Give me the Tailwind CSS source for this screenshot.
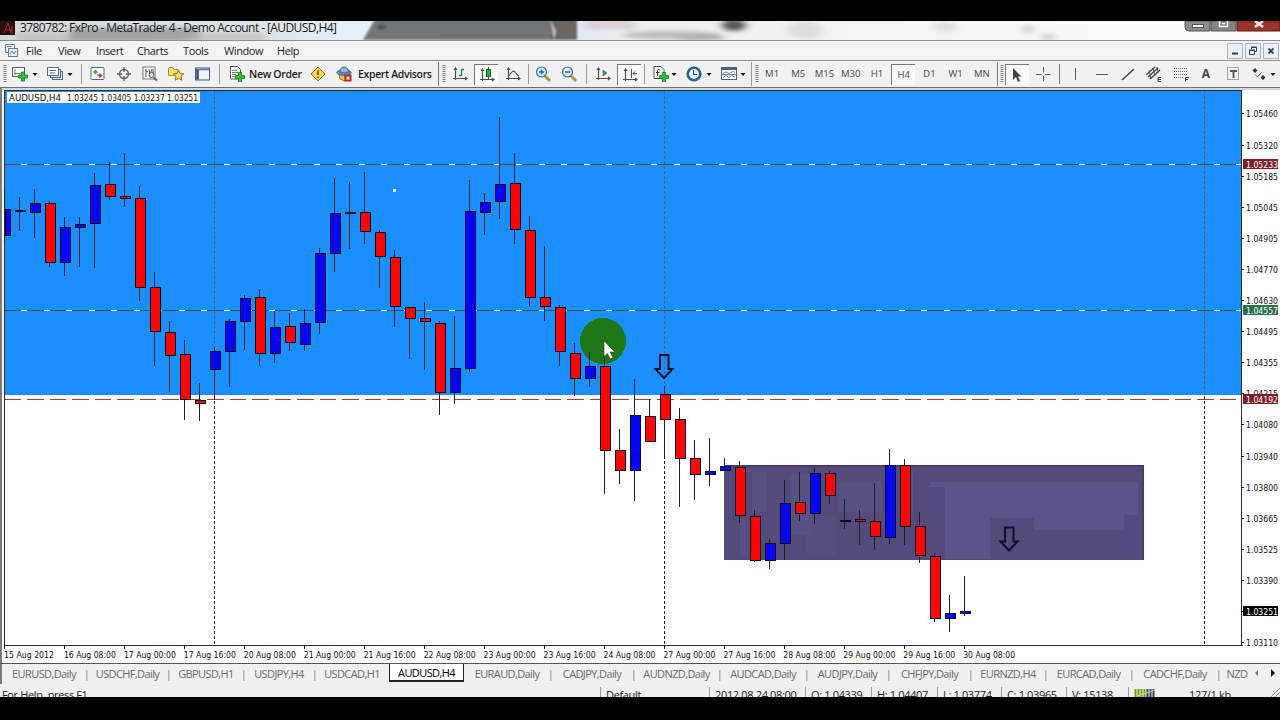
<!DOCTYPE html>
<html lang="en">
<head>
    <meta charset="UTF-8">
    <meta name="viewport" content="width=device-width, initial-scale=1.0">
    <title>MetaTrader 4</title>
    <script src="https://cdn.jsdelivr.net/npm/@tailwindcss/browser@4"></script>
</head>
<body class="bg-black overflow-hidden">
<div class="w-[1280px] h-[720px] pt-[21px] pb-[23px] bg-black flex flex-col overflow-hidden font-['Open_Sans',sans-serif] text-[#1a1a1a]">

    <!-- title bar -->
    <header class="relative h-5 shrink-0 bg-[#f4f4f6] overflow-hidden flex items-center">
        <svg class="absolute inset-0" width="1280" height="20" viewBox="0 0 1280 20">
            <defs>
                <linearGradient id="glass" x1="0" x2="1" y1="0" y2="0">
                    <stop offset="0" stop-color="#d5d9dc"/><stop offset=".2" stop-color="#dde3e7"/><stop offset=".28" stop-color="#e4f1f8"/><stop offset=".46" stop-color="#e1ebf3"/><stop offset=".5" stop-color="#eeeeee"/><stop offset=".7" stop-color="#f4f4f5"/><stop offset="1" stop-color="#fdfdfd"/>
                </linearGradient>
                <filter id="b3" x="-20%" y="-100%" width="140%" height="300%"><feGaussianBlur stdDeviation="4 2"/></filter>
                <filter id="b1"><feGaussianBlur stdDeviation=".8"/></filter>
            </defs>
            <rect width="1280" height="20" fill="url(#glass)"/>
            <g filter="url(#b3)">
                <rect x="16" y="12" width="60" height="8" fill="#aaa" opacity=".5"/>
                <rect x="70" y="7" width="130" height="13" fill="#8c8e90" opacity=".75"/>
                <rect x="185" y="12" width="80" height="8" fill="#aeb2b4" opacity=".6"/>
                <ellipse cx="672" cy="14" rx="50" ry="4" fill="#bbb"/>
                <ellipse cx="734" cy="4" rx="12" ry="6" fill="#555"/>
                <ellipse cx="700" cy="17" rx="26" ry="2.5" fill="#aaa"/>
                <ellipse cx="805" cy="9" rx="18" ry="9" fill="#dcdcdc"/>
                <ellipse cx="945" cy="6" rx="12" ry="5" fill="#ddd"/>
                <ellipse cx="1028" cy="8" rx="6" ry="4" fill="#ccc"/>
                <ellipse cx="1048" cy="16" rx="8" ry="3" fill="#ccc"/>
                <rect x="585" y="0" width="50" height="8" fill="#d8cfd0"/>
            </g>
            <g filter="url(#b1)">
                <path d="M375 -2 L363 19 H577 V-2Z" fill="#71767a"/>
                <rect x="550" y="-2" width="27" height="21" fill="#6d655f"/>
                <path d="M550 -2 L554 19 L556 10Z" fill="#c8bdb0"/>
                <ellipse cx="382" cy="6" rx="5" ry="3" fill="#54585b"/>
            </g>
            <rect y="19" width="1280" height="1" fill="#8d8f92"/>
        </svg>
        <svg class="relative shrink-0" width="15" height="20" viewBox="0 0 15 20"><rect width="15" height="14" fill="#2b0f10"/><path d="M4 12 L8 2 L11 12M6 9h7M12 5v8" stroke="#a3262b" fill="none"/></svg>
        <h1 class="relative ml-[5px] -mt-[6px] text-[12px] leading-[20px] whitespace-nowrap tracking-[-0.58px]">3780782: FxPro - MetaTrader 4 - Demo Account - [AUDUSD,H4]</h1>
        <svg class="absolute top-0 right-0" width="96" height="11" viewBox="0 0 96 11">
            <path d="M1 0H26V10H5Q1 10 1 6Z" fill="#8d8b8b" stroke="#555"/>
            <path d="M27 0H52V10H27Z" fill="#858383" stroke="#555"/>
            <path d="M53 0H96V10H53Z" fill="#9a342b" stroke="#541a16"/>
            <rect x="8.500" y="3.500" width="11" height="3" fill="#fff" stroke="#555"/>
            <path d="M35.500 0V5.500H43.500V0M38 2.500H41" fill="none" stroke="#fff" stroke-width="1.600"/>
            <path d="M71 0L79 6M79 0L71 6" stroke="#f5e9e8" stroke-width="2.500"/>
        </svg>
    </header>

    <!-- menu -->
    <nav class="h-5 shrink-0 bg-[#f3f3f3] border-b border-[#8f8f8f] flex items-center text-[11px] leading-none tracking-[-0.4px] whitespace-nowrap [&>*]:shrink-0">
        <svg class="ml-[5px] mr-2" width="13" height="13" viewBox="0 0 13 13" fill="none" stroke="#5d7f94"><path d="M.5 .5H9.500V4M.5 .5V8.500H3"/><rect x="3.500" y="4.500" width="9" height="8" fill="#e3edf3"/><path d="M5 10l2-3 2 3 2-3M2 2.500h5" /></svg>
        <a class="w-8">File</a><a class="w-[38px]">View</a><a class="w-[41px]">Insert</a><a class="w-[46px]">Charts</a><a class="w-[41px]">Tools</a><a class="w-[53px]">Window</a><a>Help</a>
        <div class="ml-auto mr-px flex gap-[2px]">
            <svg width="16" height="16" viewBox="0 0 16 16" fill="none" stroke="#39424a"><rect x=".5" y=".5" width="15" height="15" fill="#e9f0f7" stroke="#a6b6c6"/><path d="M5 10.500h6" stroke-width="2"/></svg>
            <svg width="16" height="16" viewBox="0 0 16 16" fill="none" stroke="#39424a"><rect x=".5" y=".5" width="15" height="15" fill="#e9f0f7" stroke="#a6b6c6"/><path d="M6.500 6V4.500h5v4H10M6 4h6"/><path d="M4.500 7.500h5v4h-5zM4 7h6"/></svg>
            <svg width="16" height="16" viewBox="0 0 16 16" fill="none" stroke="#39424a"><rect x=".5" y=".5" width="15" height="15" fill="#e9f0f7" stroke="#a6b6c6"/><path d="M5.500 5.500l5 5M10.500 5.500l-5 5" stroke-width="1.800"/></svg>
        </div>
    </nav>

    <!-- toolbar -->
    <div class="h-[26px] shrink-0 bg-[#f1f1f1] flex items-center text-[11px] leading-none whitespace-nowrap [&>*]:shrink-0">
        <svg width="0" height="0" class="absolute">
            <defs>
                <g id="plus"><path d="M3 0h3v3h3v3H6v3H3V6H0V3h3z" fill="#2fc03c" stroke="#137a1d" stroke-width=".8"/></g>
                <g id="axes" fill="none" stroke="#4f4f4f"><path d="M3.500 2v12M1 12.500h14M2 4l1.500-2L5 4M13 11l2 1.500L13 14" stroke-width="1.200"/></g>
                <g id="grip" fill="none" stroke="#7d7d7d"><path d="M2 0v18" stroke-width="3" stroke-dasharray="1 1"/></g>
                <path id="caret" d="M.5 0h5L3 3z" fill="#111"/>
            </defs>
        </svg>
        <svg class="ml-[3px]" width="4" height="18"><use href="#grip"/></svg>
        <svg class="ml-[5px]" width="16" height="16" viewBox="0 0 16 16"><rect x=".5" y="1.500" width="12" height="9" fill="#fff" stroke="#4b5f6b"/><path d="M3 3v6M2 7.500h8" stroke="#6d8291" fill="none"/><use href="#plus" x="6.500" y="6"/></svg>
        <svg class="ml-1" width="6" height="3"><use href="#caret"/></svg>
        <svg class="ml-[9px]" width="16" height="16" viewBox="0 0 16 16" stroke="#4b6b85"><rect x="5.500" y="5.500" width="10" height="8" fill="#dfe9f1"/><rect x="3.500" y="3.500" width="10" height="8" fill="#dfe9f1"/><rect x=".5" y="1.500" width="11" height="8" fill="#fff"/><path d="M2 4.500h7M3 7h5"/></svg>
        <svg class="ml-1" width="6" height="3"><use href="#caret"/></svg>
        <i class="ml-2 w-px h-5 bg-[#9a9a9a]"></i>
        <svg class="ml-2" width="16" height="16" viewBox="0 0 16 16"><rect x="1" y="1.500" width="13" height="12" rx="1" fill="#fff" stroke="#4c6c84"/><path d="M3.500 6L5.500 4l2 2-2 2z" fill="#2fae3c" stroke="#1c7a28" stroke-width=".6"/><path d="M8 9.500l2-2 2 2-2 2z" fill="#d83a28" stroke="#8f2217" stroke-width=".6"/><path d="M7 8l1.500 1.500" stroke="#777"/></svg>
        <svg class="ml-[10px]" width="16" height="16" viewBox="0 0 16 16" fill="none" stroke="#606060" stroke-width="1.400"><circle cx="8" cy="8" r="4.500"/><path d="M8 1v5M8 10v5M1 8h5M10 8h5"/></svg>
        <svg class="ml-[10px]" width="16" height="16" viewBox="0 0 16 16" fill="none" stroke="#555"><rect x="1" y="1" width="12" height="12" fill="#fff" stroke="#777"/><path d="M4 3v8M3 4l3 2M7 3l1 6 2-6M11 3v5"/><circle cx="9.500" cy="9" r="2.500" fill="#dfeaf0"/><path d="M11.500 11.500l3.500 3" stroke-width="2" stroke="#6b6b4a"/></svg>
        <svg class="ml-[10px]" width="16" height="16" viewBox="0 0 16 16"><path d="M.5 2.500V9.500H10V3.500H6L5 1.500H1z" fill="#f7e27a" stroke="#a58a2e"/><path d="M10.500 4l1.600 3.500 3.600.4-2.700 2.500.8 3.900-3.300-2-3.300 2 .8-3.900L5.300 7.900 9 7.500z" fill="#fbe25a" stroke="#8a6d1c"/></svg>
        <svg class="ml-[10px]" width="16" height="16" viewBox="0 0 16 16"><rect x="1.500" y="2" width="14" height="12" fill="#eef4f9" stroke="#3e5b78"/><path d="M2 3.500h13" stroke="#557a9d" stroke-width="1.500"/><path d="M3.500 4v9.500" stroke="#2e4a66" stroke-width="2.500"/></svg>
        <i class="ml-[9px] w-px h-5 bg-[#9a9a9a]"></i>
        <svg class="ml-[9px]" width="16" height="16" viewBox="0 0 16 16"><path d="M1.500 .5h7l3 3v9.500h-10z" fill="#fff" stroke="#555"/><path d="M3 4.500h5M3 6.500h6M3 8.500h4M3 10.500h4" stroke="#777"/><use href="#plus" x="6.500" y="6.500"/></svg>
        <span class="ml-1 w-[52px] text-[10.5px] font-semibold tracking-[-0.3px]">New Order</span>
        <svg class="ml-[9px]" width="16" height="16" viewBox="0 0 16 16"><path d="M8 1l7 7-7 7-7-7z" fill="#f6d552" stroke="#8f6d14"/><path d="M8 4.500v4.500M8 10.500v1.500" stroke="#5b430b" stroke-width="1.500"/></svg>
        <svg class="ml-[10px]" width="16" height="16" viewBox="0 0 16 16"><path d="M3 7l1 6 5 2 4-2 1-6z" fill="#ecc04e" stroke="#8d6a1c"/><ellipse cx="8" cy="6.500" rx="7.300" ry="2.800" fill="#5e93b4" stroke="#345c77" stroke-width=".8"/><path d="M4 6Q4 1 8 1t4.500 5Q8 8 4 6z" fill="#8abbd6" stroke="#345c77" stroke-width=".8"/><rect x="9.500" y="9.500" width="5" height="5" fill="#fff" stroke="#c02418" stroke-width="2"/></svg>
        <span class="ml-[6px] w-[74px] text-[10.5px] font-semibold tracking-[-0.35px]">Expert Advisors</span>
        <i class="ml-[6px] w-px h-6 bg-[#777]"></i>
        <svg class="ml-[3px]" width="4" height="18"><use href="#grip"/></svg>
        <svg class="ml-[6px]" width="16" height="16" viewBox="0 0 16 16"><use href="#axes"/><path d="M9.500 3v7M7 9.500h2.500M9.500 3.500H12" stroke="#3a7d43" stroke-width="1.300" fill="none"/></svg>
        <span class="ml-[6px] w-6 h-[21px] flex items-center justify-center bg-[#fafafa] border-t border-l border-[#777]"><svg width="16" height="16" viewBox="0 0 16 16"><use href="#axes"/><path d="M9.500 0v12" stroke="#166d22"/><rect x="7.500" y="2.500" width="4" height="7" fill="#25ab3a" stroke="#166d22"/></svg></span>
        <svg class="ml-[7px]" width="16" height="16" viewBox="0 0 16 16"><use href="#axes"/><path d="M4 10q4-7 6-4t4 4" stroke="#555" stroke-width="1.200" fill="none"/></svg>
        <i class="ml-[7px] w-px h-5 bg-[#9a9a9a]"></i>
        <svg class="ml-[6px]" width="16" height="16" viewBox="0 0 16 16"><path d="M10 10l5 5" stroke="#b8922c" stroke-width="2.800"/><circle cx="6.500" cy="6" r="5" fill="#d9effc" stroke="#2d6fa8" stroke-width="1.200"/><path d="M4 6h5M6.500 3.500v5" stroke="#1d63a0" stroke-width="1.500"/></svg>
        <svg class="ml-[10px]" width="16" height="16" viewBox="0 0 16 16"><path d="M10 10l5 5" stroke="#b8922c" stroke-width="2.800"/><circle cx="6.500" cy="6" r="5" fill="#d9effc" stroke="#2d6fa8" stroke-width="1.200"/><path d="M4 6h5" stroke="#1d63a0" stroke-width="1.500"/></svg>
        <i class="ml-[9px] w-px h-5 bg-[#9a9a9a]"></i>
        <svg class="ml-2" width="16" height="16" viewBox="0 0 16 16"><use href="#axes"/><path d="M8 4l4 3-4 3z" fill="#3f9a4b" stroke="#2c6d35" stroke-width=".6"/></svg>
        <span class="ml-[6px] w-6 h-[21px] flex items-center justify-center bg-[#fafafa] border-t border-l border-[#777]"><svg width="16" height="16" viewBox="0 0 16 16"><use href="#axes"/><path d="M9.500 2v9M15 6.500h-4M13 4.500l-2 2 2 2" stroke="#4f4f4f" fill="none"/></svg></span>
        <i class="ml-[3px] w-px h-5 bg-[#9a9a9a]"></i>
        <svg class="ml-2" width="16" height="16" viewBox="0 0 16 16"><path d="M1 .5h7l3 3V12.500H1z" fill="#fff" stroke="#555"/><path d="M6.500 3.500q-2-1-2 1.500v5M3 6.500h3.500" stroke="#333" fill="none"/><use href="#plus" x="6.500" y="6.500"/></svg>
        <svg class="ml-[2px]" width="6" height="3"><use href="#caret"/></svg>
        <svg class="ml-[9px]" width="16" height="16" viewBox="0 0 16 16"><circle cx="8" cy="8" r="6.300" fill="#e8f4fc" stroke="#29618f" stroke-width="2.600"/><path d="M7.500 4v4.500H11" stroke="#333" fill="none"/></svg>
        <svg class="ml-1" width="6" height="3"><use href="#caret"/></svg>
        <svg class="ml-[9px]" width="16" height="16" viewBox="0 0 16 16" fill="none" stroke="#4b6478"><rect x=".5" y="1.500" width="15" height="12" fill="#fff"/><path d="M1 3h14" stroke-width="2"/><path d="M2 7.500l3-1.500 3 1.500 4-2 2 1M2 11.500l3-2 3 2 3-2 3 2M1 8.500h14" stroke-width=".8"/></svg>
        <svg class="ml-[3px]" width="6" height="3"><use href="#caret"/></svg>
        <i class="ml-[5px] w-px h-6 bg-[#9a9a9a]"></i>
        <svg class="ml-[3px]" width="4" height="18"><use href="#grip"/></svg>
        <div class="w-[236px] grid grid-cols-9 items-center justify-items-center text-[9.5px] text-[#444]">
            <span>M1</span><span>M5</span><span>M15</span><span>M30</span><span>H1</span><span class="w-6 h-[21px] flex items-center justify-center bg-[#fafafa] border-t border-l border-[#777]">H4</span><span>D1</span><span>W1</span><span>MN</span>
        </div>
        <i class="ml-[2px] w-px h-6 bg-[#777]"></i>
        <svg class="ml-[2px]" width="4" height="18"><use href="#grip"/></svg>
        <span class="ml-px w-6 h-[21px] flex items-center justify-center bg-[#fafafa] border-t border-l border-[#777]"><svg class="-ml-1" width="16" height="16" viewBox="0 0 16 16"><path d="M5 1v12l3-3 2 5 2-1-2-4.500h3.500z" fill="#444"/></svg></span>
        <svg class="ml-[6px]" width="16" height="16" viewBox="0 0 16 16" stroke="#555"><path d="M8.500 1v5.500M8.500 10v5.500M1 8.500h5.500M10 8.500h5.500"/></svg>
        <i class="ml-2 w-px h-5 bg-[#777]"></i>
        <svg class="ml-[7px]" width="16" height="16" viewBox="0 0 16 16" stroke="#555"><path d="M8.500 2v12"/></svg>
        <svg class="ml-[11px]" width="16" height="16" viewBox="0 0 16 16" stroke="#555"><path d="M2 8.500h12"/></svg>
        <svg class="ml-[10px]" width="16" height="16" viewBox="0 0 16 16" stroke="#444"><path d="M2 14L14 3" stroke-width="1.600"/></svg>
        <svg class="ml-[10px]" width="16" height="16" viewBox="0 0 16 16" stroke="#444" fill="none"><path d="M0 9L9 1M2 11L12 2M4 13L14 4" stroke-width="1.300"/><path d="M3 4l2 9M7 2l2 8M11 1l1 6" stroke-width=".8"/><path d="M15 11.500h-3v4h3M12 13.500h3"/></svg>
        <svg class="ml-[11px]" width="16" height="16" viewBox="0 0 16 16" stroke="#666" fill="none"><path d="M1 2.500h13M1 5.500h13M1 8.500h13M1 11.500h9" stroke-dasharray="1 1"/><path d="M12.500 15.500v-4H16M12.500 13.500H15" stroke="#333"/></svg>
        <span class="ml-[9px] w-4 text-center text-[12px] font-bold text-[#444]">A</span>
        <svg class="ml-[11px]" width="16" height="16" viewBox="0 0 16 16" stroke="#555" fill="none"><rect x="2.500" y="1.500" width="11" height="12" stroke-dasharray="1 1"/><path d="M5 5h7M8.500 5v7" stroke-width="1.800"/></svg>
        <svg class="ml-[10px]" width="16" height="16" viewBox="0 0 16 16" fill="#333"><path d="M4 2l2.500 2.500L4 7 1.500 4.500zM12 9l2.500 2.500L12 14l-2.500-2.500z"/><path d="M4 8.500l2.500 2.500 4-4.500" fill="none" stroke="#555"/></svg>
        <svg class="ml-[3px]" width="6" height="3"><use href="#caret"/></svg>
    </div>

    <!-- chart -->
    <svg class="block shrink-0" width="1280" height="577" viewBox="0 87 1280 577" shape-rendering="crispEdges">
        <rect y="87" width="1280" height="577" fill="#fdfdfd"/>
        <rect y="87" width="1280" height="1" fill="#6e6e6e"/>
        <rect y="88" width="1280" height="2" fill="#d9d9d4"/>
        <rect y="88" width="2" height="576" fill="#7c7c7c"/>
        <rect x="5" y="90" width="1236" height="305" fill="#1c8fff"/>
        <path d="M4 90.500H1241.500M4.500 90V645.500H1243M1241.500 90V645" fill="none" stroke="#2b2b2b"/>
        <rect x="724" y="465" width="420" height="95" fill="#544a7c"/>
        <g fill="#5c5389">
            <path d="M930 482h208v33h-14v15H1034v-12h-44v41H945V487h-15z"/>
            <rect x="752" y="470" width="15" height="42" opacity=".5"/><rect x="790" y="475" width="22" height="60" opacity=".6"/>
            <rect x="806" y="516" width="30" height="40" opacity=".4"/><rect x="838" y="482" width="44" height="30" opacity=".5"/>
            <rect x="910" y="470" width="3" height="50"/><rect x="740" y="520" width="12" height="36" opacity=".5"/>
        </g>
        <path d="M724 465.500h420M1143 465v95" stroke="#463c68" stroke-width="2" fill="none"/>
        <g fill="none">
            <path d="M5 164.500H1241" stroke="#4d4a5e"/>
            <path d="M21 164.500H1241" stroke="#f2f8ff" stroke-dasharray="6 16.5"/>
            <path d="M5 310.500H1241" stroke="#2c5560"/>
            <path d="M21 310.500H1241" stroke="#e6fff8" stroke-dasharray="6 16.5"/>
            <path d="M4.500 399.500H1241" stroke="#a8383f" stroke-dasharray="16.5 6"/>
            <path d="M214.500 91V395M664.500 91V395M1204.500 91V395" stroke="#4f6076" stroke-dasharray="3 2"/>
            <path d="M214.500 396V645M664.500 396V645M1204.500 396V645" stroke="#222" stroke-dasharray="3 2"/>
        </g>
        <rect x="393" y="189" width="3" height="3" fill="#d8f4ff"/>
        <g shape-rendering="auto" fill="none" stroke="#0b1030" stroke-width="2">
            <path id="arrow" d="M660 355h8.500v14h4l-8.500 9-8.500-9h4.500z"/>
            <use href="#arrow" x="345" y="172.500"/>
        </g>
        <circle cx="603" cy="341" r="23" fill="#1f7817"/>
        <g id="candles"></g>
        <path d="M604 341v15.500l3.500-3 2.500 5.500 3-1.200-2.700-5.800h4.700z" fill="#fff" stroke="#333" stroke-width=".6" shape-rendering="auto"/>
        <rect x="7" y="92" width="193" height="11" fill="#fff"/>
        <g id="labels" font-family="'DejaVu Sans Condensed','DejaVu Sans',sans-serif" font-size="9.500" fill="#111">
            <text x="9" y="101" textLength="52" lengthAdjust="spacingAndGlyphs">AUDUSD,H4</text>
            <text x="67" y="101" textLength="131" lengthAdjust="spacingAndGlyphs">1.03245 1.03405 1.03237 1.03251</text>
        </g>
        <rect y="663" width="1280" height="1" fill="#555"/>
    </svg>

    <!-- chart tabs -->
    <div class="h-[20px] shrink-0 bg-[#f0f0f0] flex text-[11px] leading-none text-[#6a6a6a] whitespace-nowrap overflow-hidden tracking-[-0.6px] border-l-2 border-[#7c7c7c] [&>*]:shrink-0 [&>*]:h-[18px] [&>*]:flex [&>*]:items-center [&>*]:justify-center">
        <span class="w-[84px]">EURUSD,Daily</span><i class="text-[#777] not-italic w-px">|</i>
        <span class="w-[81px]">USDCHF,Daily</span><i class="text-[#777] not-italic w-px">|</i>
        <span class="w-[74px]">GBPUSD,H1</span><i class="text-[#777] not-italic w-px">|</i>
        <span class="w-[70px]">USDJPY,H4</span><i class="text-[#777] not-italic w-px">|</i>
        <span class="w-[74px]">USDCAD,H1</span>
        <span class="w-[75px] bg-white text-black border-x border-b-2 border-[#222]">AUDUSD,H4</span>
        <span class="w-[86px]">EURAUD,Daily</span><i class="text-[#777] not-italic w-px">|</i>
        <span class="w-[82px]">CADJPY,Daily</span><i class="text-[#777] not-italic w-px">|</i>
        <span class="w-[85px]">AUDNZD,Daily</span><i class="text-[#777] not-italic w-px">|</i>
        <span class="w-[86px]">AUDCAD,Daily</span><i class="text-[#777] not-italic w-px">|</i>
        <span class="w-[81px]">AUDJPY,Daily</span><i class="text-[#777] not-italic w-px">|</i>
        <span class="w-[81px]">CHFJPY,Daily</span><i class="text-[#777] not-italic w-px">|</i>
        <span class="w-[74px]">EURNZD,H4</span><i class="text-[#777] not-italic w-px">|</i>
        <span class="w-[85px]">EURCAD,Daily</span><i class="text-[#777] not-italic w-px">|</i>
        <span class="w-[86px]">CADCHF,Daily</span><i class="text-[#777] not-italic w-px">|</i>
        <span class="w-[36px]">NZD</span>
        <span class="w-[24px]"><svg width="24" height="8"><path d="M3 1v6L0 4z" fill="#777"/><path d="M16 0v8l4-4z" fill="#111"/></svg></span>
    </div>

    <!-- status bar, cut off at the bottom edge -->
    <footer class="h-[13px] shrink-0 bg-[#efefef] pt-[3px] flex items-start overflow-hidden text-[11px] leading-[15px] whitespace-nowrap tracking-[-0.35px] [&>*]:shrink-0 [&>*]:h-5 [&>*]:pl-[5px]">
        <span class="w-[600px] !pl-[2px]">For Help, press F1</span>
        <span class="w-[109px] border-l border-[#999]">Default</span>
        <span class="w-[96px] border-l border-[#999]">2012.08.24 08:00</span>
        <span class="w-[66px] border-l border-[#999]">O: 1.04339</span>
        <span class="w-[66px] border-l border-[#999]">H: 1.04407</span>
        <span class="w-[64px] border-l border-[#999]">L: 1.03774</span>
        <span class="w-[65px] border-l border-[#999]">C: 1.03965</span>
        <span class="w-[62px] border-l border-[#999]">V: 15138</span>
        <span class="w-[61px] border-l border-[#999]"><svg class="mt-[2px]" width="22" height="8"><path d="M1.500 0v8M4.500 0v8M7.500 0v8M10.500 0v8" stroke="#7d9a10" stroke-width="2"/><path d="M13.500 0v8M16.500 0v8M19.500 0v8" stroke="#28465f" stroke-width="2"/><path d="M3 7L21 1" stroke="#efefef" stroke-width=".6"/></svg></span>
        <span class="!pl-0">127/1 kb</span>
        <span class="ml-auto !pl-0"><svg width="10" height="10" fill="none" stroke="#888"><path d="M1 10L10 1M5 10l5-5"/></svg></span>
    </footer>
</div>

<script>
    // [high, low, body top, body bottom, up]; one candle every 15px
    const candles = [
        [187,243,209,236,1],[197,231,210,212,1],[189,238,203,213,1],[201,267,203,263,0],[217,276,227,263,1],
        [217,267,224,228,1],[173,268,185,224,1],[162,200,184,197,0],[153,207,196,199,0],[186,301,198,288,0],
        [272,366,287,332,0],[321,392,332,356,0],[340,420,354,400,0],[383,421,400,404,0],[347,400,351,370,1],
        [319,387,321,352,1],[295,350,298,322,1],[289,366,297,354,0],[311,363,327,354,1],[313,351,326,343,0],
        [309,351,323,345,1],[248,334,253,323,1],[178,272,213,254,1],[182,249,212,214,1],[172,244,212,232,0],
        [230,288,232,257,0],[250,327,257,307,0],[307,359,307,319,0],[302,370,318,322,0],[321,415,323,393,0],
        [316,404,368,393,1],[180,372,211,369,1],[193,235,202,213,1],[117,219,184,202,1],[153,244,183,230,0],
        [216,306,230,298,0],[246,321,297,307,0],[305,366,307,352,0],[343,396,353,379,0],[352,387,366,379,1],
        [358,494,366,451,0],[429,484,450,471,0],[379,501,415,471,1],[399,442,416,442,0],[386,456,394,420,0],
        [408,507,419,459,0],[440,500,458,475,0],[438,486,471,475,1],[458,471,466,471,1],[461,523,467,516,0],
        [510,562,516,561,0],[539,569,543,561,1],[480,560,503,544,1],[472,521,502,514,0],[468,524,473,514,1],
        [471,504,473,496,0],[499,529,520,522,1],[510,545,519,522,0],[483,550,521,537,0],[449,544,465,538,1],
        [459,545,465,527,0],[512,563,526,556,0],[553,622,556,619,0],[595,632,613,619,1],[576,616,611,614,1]
    ];
    const ns = 'http://www.w3.org/2000/svg';
    function add(parent, tag, attrs, text) {
        const el = document.createElementNS(ns, tag);
        for (const k in attrs) el.setAttribute(k, attrs[k]);
        if (text) el.textContent = text;
        parent.appendChild(el);
    }

    const group = document.getElementById('candles');
    candles.forEach(([high, low, top, bottom, up], i) => {
        const x = 5 + i * 15;
        add(group, 'rect', { x: x - 1, y: high, width: 1, height: low - high, fill: '#16202e' });
        const left = Math.max(x - 5, 5);
        add(group, 'rect', { x: left + .5, y: top + .5, width: x + 4.5 - left, height: bottom - top - 1, fill: up ? '#0505f5' : '#fb0505', stroke: '#0a0a20' });
    });

    const labels = document.getElementById('labels');
    const dates = ['15 Aug 2012', '16 Aug 08:00', '17 Aug 00:00', '17 Aug 16:00', '20 Aug 08:00', '21 Aug 00:00', '21 Aug 16:00', '22 Aug 08:00', '23 Aug 00:00', '23 Aug 16:00', '24 Aug 08:00', '27 Aug 00:00', '27 Aug 16:00', '28 Aug 08:00', '29 Aug 00:00', '29 Aug 16:00', '30 Aug 08:00'];
    dates.forEach((d, i) => {
        add(labels, 'rect', { x: 4 + i * 60, y: 645, width: 1, height: 4 });
        add(labels, 'text', { x: 4 + i * 59.95, y: 658, textLength: i ? 52 : 50, lengthAdjust: 'spacingAndGlyphs' }, d);
    });

    const prices = ['1.05460', '1.05320', '1.05185', '1.05045', '1.04905', '1.04770', '1.04630', '1.04495', '1.04355', '1.04215', '1.04080', '1.03940', '1.03800', '1.03665', '1.03525', '1.03390', '', '1.03110'];
    prices.forEach((p, i) => {
        const y = Math.round(113.4 + i * 31.1);
        add(labels, 'rect', { x: 1241, y: y, width: 3, height: 1 });
        if (p) add(labels, 'text', { x: 1246, y: y + 4, textLength: 32, lengthAdjust: 'spacingAndGlyphs' }, p);
    });

    const marks = [['1.05233', 164, '#7d1d26'], ['1.04557', 310, '#2c6e4e'], ['1.04192', 399, '#7d1d26'], ['1.03251', 611, '#000']];
    marks.forEach(([p, y, fill]) => {
        add(labels, 'rect', { x: 1243, y: y - 5, width: 35, height: 10, fill: fill });
        add(labels, 'text', { x: 1246, y: y + 3.5, textLength: 32, lengthAdjust: 'spacingAndGlyphs', fill: '#fff' }, p);
    });
</script>
</body>
</html>
